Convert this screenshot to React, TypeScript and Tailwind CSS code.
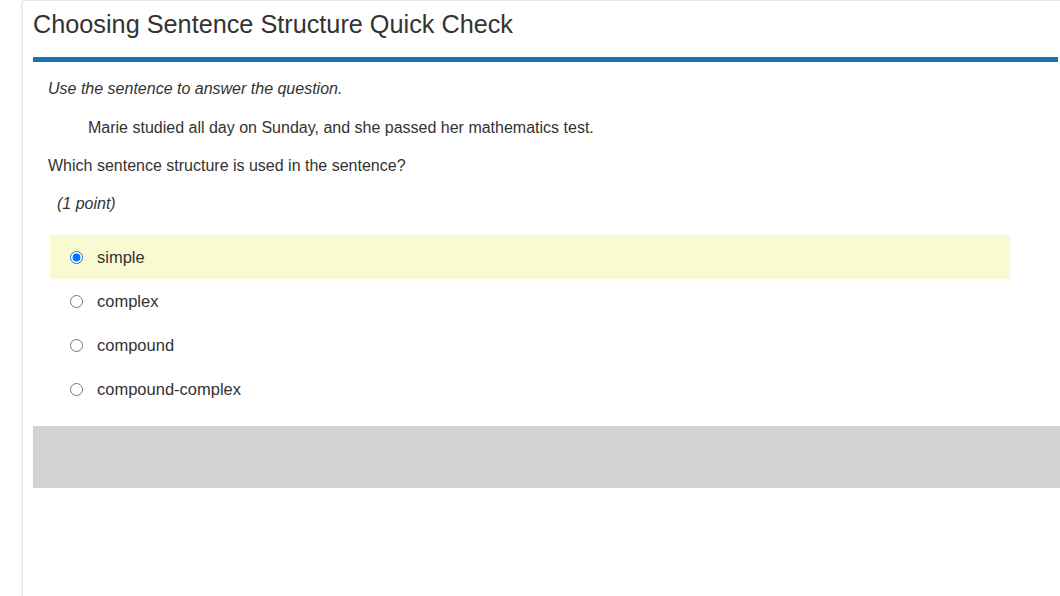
import { useState } from "react";

const OPTIONS = ["simple", "complex", "compound", "compound-complex"];

export default function App() {
  const [picked, setPicked] = useState("simple");

  return (
    <div className="h-[596px] w-[1060px] overflow-hidden bg-white pl-[22px] font-['Liberation_Sans',Arial,sans-serif] text-[#333]">
      <div className="h-[620px] w-[1060px] rounded-tl-[4px] border-l border-t border-[#e6e6e6] pl-[10px] pt-[7px] shadow-[-1px_0_3px_rgba(0,0,0,0.08)]">
        <h1 className="text-[25.25px] leading-[32px] font-normal">Choosing Sentence Structure Quick Check</h1>
        <div className="mt-[17px] h-[5px] w-[1025px] bg-[#1a73aa]" />

        <div className="pl-[15px] pt-[17px] text-[16px]">
          <p className="italic leading-[20px]">Use the sentence to answer the question.</p>
          <p className="mt-[19px] pl-[40px] leading-[20px]">
            Marie studied all day on Sunday, and she passed her mathematics test.
          </p>
          <p className="mt-[18px] leading-[20px]">Which sentence structure is used in the sentence?</p>
          <p className="mt-[18px] pl-[9px] italic leading-[20px]">(1 point)</p>
        </div>

        <div className="mt-[21px] w-[977px] pl-[17px]">
          {OPTIONS.map((opt) => {
            const active = picked === opt;
            return (
              <label
                key={opt}
                className={`flex h-[44px] items-center text-[16.5px] ${active ? "bg-[#fafad2]" : ""}`}
              >
                <input
                  type="radio"
                  name="answer"
                  checked={active}
                  onChange={() => setPicked(opt)}
                  className="ml-[20px] mr-[14px] h-[13px] w-[13px]"
                />
                <span>{opt}</span>
              </label>
            );
          })}
        </div>

        <div className="mt-[15px] h-[62px] w-[1030px] bg-[#d3d3d3]" />
      </div>
    </div>
  );
}
